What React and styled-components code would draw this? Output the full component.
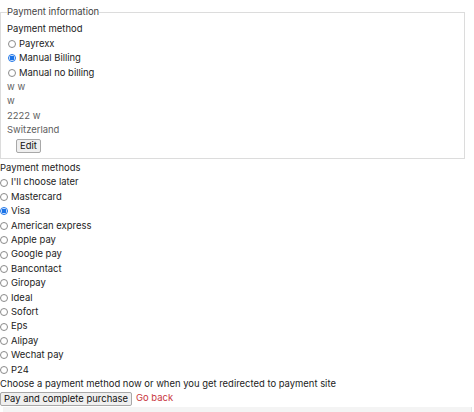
import React, { useState } from 'react';
import styled, { createGlobalStyle } from 'styled-components';

const GlobalStyle = createGlobalStyle`
  body {
    margin: 0;
    background: #ffffff;
    font-family: Inter, Lato, "Liberation Sans", sans-serif;
    font-size: 9.45px;
    line-height: 14.4px;
    color: #1c1c1c;
  }
`;

const Page = styled.div`
  padding-top: 5px;
`;

const InfoBox = styled.fieldset`
  margin: 0 9px 0 0;
  padding: 3px 6px 5px;
  border: 1px solid #dcdcdc;
`;

const Legend = styled.legend`
  padding: 0;
  color: #444444;
`;

const Heading = styled.div`
  color: #1c1c1c;
`;

const Muted = styled.div`
  color: #5e5e5e;
`;

const Option = styled.label`
  display: flex;
  align-items: center;
  gap: 3px;
  height: 14.4px;
  padding-left: ${(p) => (p.$inset ? '1px' : '0')};
`;

const Radio = styled.input.attrs({ type: 'radio' })`
  appearance: none;
  margin: 0;
  width: 8px;
  height: 8px;
  border-radius: 50%;
  border: 1px solid #8a8a8a;
  background: #ffffff;
  &:checked {
    border-color: #1a73e8;
    background: radial-gradient(circle, #1a73e8 0 2.2px, #ffffff 2.6px);
  }
`;

const SmallButton = styled.button`
  font: inherit;
  line-height: 12px;
  color: #111111;
  background: #efefef;
  border: 1px solid #a8a8a8;
  border-radius: 2px;
  padding: 0 3px;
  margin: 1px 0 0 9px;
`;

const Section = styled.div`
  padding-top: 2px;
`;

const Actions = styled.div`
  display: flex;
  align-items: center;
  gap: 4px;
`;

const BigButton = styled(SmallButton)`
  margin: 0;
`;

const BackLink = styled.a`
  color: #c9373d;
  text-decoration: none;
`;

const Footer = styled.div`
  margin: 1px 2px 0 3px;
  height: 20px;
  background: #f4f4f4;
  border-right: 1px solid #e6e6e6;
`;

const billing = ['Payrexx', 'Manual Billing', 'Manual no billing'];
const address = ['w w', 'w', '2222 w', 'Switzerland'];
const methods = [
  "I'll choose later",
  'Mastercard',
  'Visa',
  'American express',
  'Apple pay',
  'Google pay',
  'Bancontact',
  'Giropay',
  'Ideal',
  'Sofort',
  'Eps',
  'Alipay',
  'Wechat pay',
  'P24',
];

export default function App() {
  const [bill, setBill] = useState('Manual Billing');
  const [method, setMethod] = useState('Visa');

  return (
    <Page>
      <GlobalStyle />
      <InfoBox>
        <Legend>Payment information</Legend>
        <Heading>Payment method</Heading>
        {billing.map((b) => (
          <Option key={b} $inset>
            <Radio name="billing" checked={bill === b} onChange={() => setBill(b)} />
            {b}
          </Option>
        ))}
        {address.map((a) => (
          <Muted key={a}>{a}</Muted>
        ))}
        <SmallButton>Edit</SmallButton>
      </InfoBox>
      <Section>
        <Heading>Payment methods</Heading>
        {methods.map((m) => (
          <Option key={m}>
            <Radio name="method" checked={method === m} onChange={() => setMethod(m)} />
            {m}
          </Option>
        ))}
        <Heading>Choose a payment method now or when you get redirected to payment site</Heading>
        <Actions>
          <BigButton>Pay and complete purchase</BigButton>
          <BackLink href="#">Go back</BackLink>
        </Actions>
        <Footer />
      </Section>
    </Page>
  );
}
